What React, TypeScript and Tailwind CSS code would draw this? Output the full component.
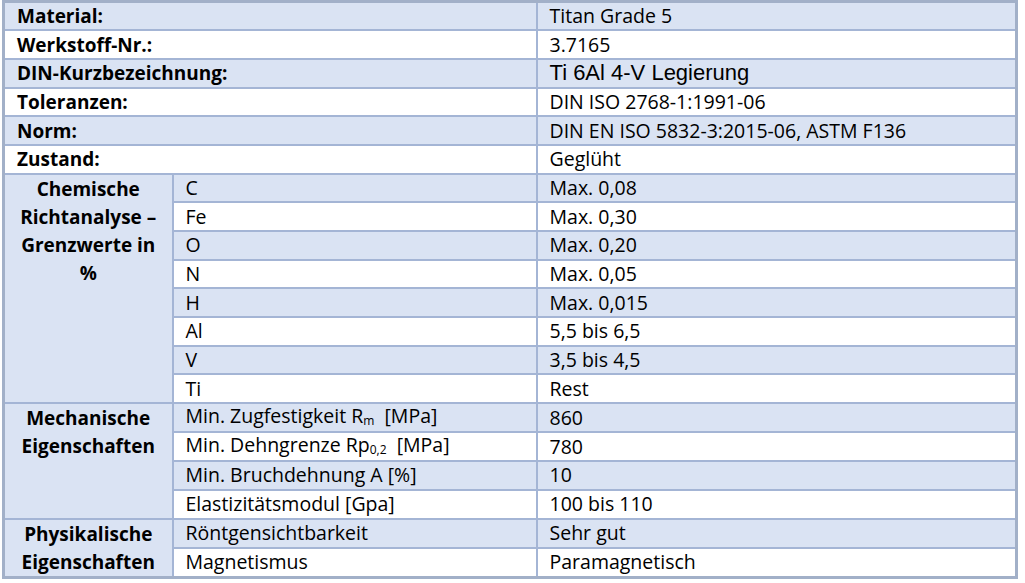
import React from 'react';

const font = { fontFamily: '"Open Sans", "Noto Sans", sans-serif' };

type Row = { label: React.ReactNode; value: string; blue: boolean };

const topRows: { label: string; value: string; arial?: boolean }[] = [
  { label: 'Material:', value: 'Titan Grade 5' },
  { label: 'Werkstoff-Nr.:', value: '3.7165' },
  { label: 'DIN-Kurzbezeichnung:', value: 'Ti 6Al 4-V Legierung', arial: true },
  { label: 'Toleranzen:', value: 'DIN ISO 2768-1:1991-06' },
  { label: 'Norm:', value: 'DIN EN ISO 5832-3:2015-06, ASTM F136' },
  { label: 'Zustand:', value: 'Geglüht' },
];

const chem: Row[] = [
  { label: 'C', value: 'Max. 0,08', blue: true },
  { label: 'Fe', value: 'Max. 0,30', blue: false },
  { label: 'O', value: 'Max. 0,20', blue: true },
  { label: 'N', value: 'Max. 0,05', blue: false },
  { label: 'H', value: 'Max. 0,015', blue: true },
  { label: 'Al', value: '5,5 bis 6,5', blue: false },
  { label: 'V', value: '3,5 bis 4,5', blue: true },
  { label: 'Ti', value: 'Rest', blue: false },
];

const mech: Row[] = [
  {
    label: (
      <>
        Min. Zugfestigkeit R<span className="text-[12px] relative top-[2px]">m</span>&nbsp; [MPa]
      </>
    ),
    value: '860',
    blue: true,
  },
  {
    label: (
      <>
        Min. Dehngrenze Rp<span className="text-[12px] relative top-[2px]">0,2</span>&nbsp; [MPa]
      </>
    ),
    value: '780',
    blue: false,
  },
  { label: 'Min. Bruchdehnung A [%]', value: '10', blue: true },
  { label: 'Elastizitätsmodul [Gpa]', value: '100 bis 110', blue: false },
];

const phys: Row[] = [
  { label: 'Röntgensichtbarkeit', value: 'Sehr gut', blue: true },
  { label: 'Magnetismus', value: 'Paramagnetisch', blue: false },
];

const cell = 'border-2 border-[#a4b5d5] pl-[12px] pr-2 h-[28.7px] leading-[24px] align-middle whitespace-nowrap';
const blueBg = 'bg-[#dae3f3]';

function Group({ title, rows }: { title: React.ReactNode; rows: Row[] }) {
  return (
    <>
      {rows.map((r, i) => (
        <tr key={i}>
          {i === 0 && (
            <td
              rowSpan={rows.length}
              className={`border-2 border-[#a4b5d5] ${blueBg} align-top text-center font-bold text-[19px] leading-[28px] pt-0 px-0 whitespace-nowrap`}
            >
              {title}
            </td>
          )}
          <td className={`${cell} ${r.blue ? blueBg : 'bg-white'}`}>{r.label}</td>
          <td className={`${cell} ${r.blue ? blueBg : 'bg-white'}`}>{r.value}</td>
        </tr>
      ))}
    </>
  );
}

export default function App() {
  return (
    <div className="w-[1025px] h-[583px] bg-white pl-[2px] overflow-hidden" style={font}>
      <table className="border-collapse w-[1016px] table-fixed text-[19.5px] text-black border-[3px] border-[#a2b0c8]">
        <colgroup>
          <col className="w-[169px]" />
          <col className="w-[364px]" />
          <col />
        </colgroup>
        <tbody>
          {topRows.map((r, i) => (
            <tr key={r.label}>
              <td colSpan={2} className={`${cell} font-bold text-[19px] ${i % 2 === 0 ? blueBg : 'bg-white'}`}>
                {r.label}
              </td>
              <td
                className={`${cell} ${i % 2 === 0 ? blueBg : 'bg-white'} ${r.arial ? 'text-[22px]' : ''}`}
                style={r.arial ? { fontFamily: '"Liberation Sans", Arial, sans-serif' } : undefined}
              >
                {r.value}
              </td>
            </tr>
          ))}
          <Group
            title={
              <>
                Chemische
                <br />
                Richtanalyse –
                <br />
                Grenzwerte in
                <br />%
              </>
            }
            rows={chem}
          />
          <Group
            title={
              <>
                Mechanische
                <br />
                Eigenschaften
              </>
            }
            rows={mech}
          />
          <Group
            title={
              <>
                Physikalische
                <br />
                Eigenschaften
              </>
            }
            rows={phys}
          />
        </tbody>
      </table>
    </div>
  );
}
